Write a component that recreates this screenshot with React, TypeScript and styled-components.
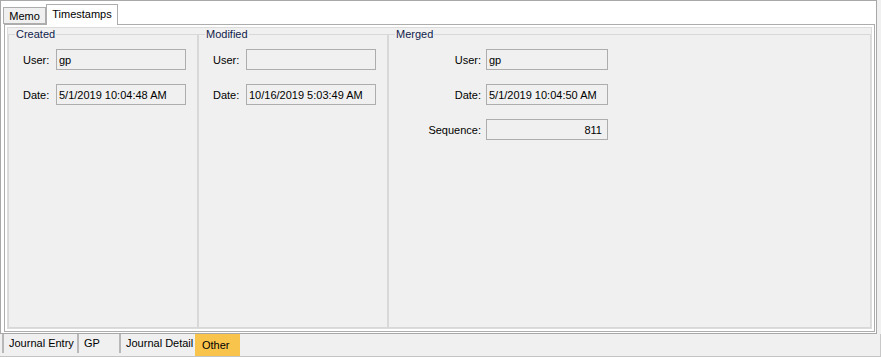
import React from 'react';
import styled, {createGlobalStyle} from "styled-components";

const GlobalStyle = createGlobalStyle`
  body {
    margin: 0;
    background: #f0f0f0;
    font-family: "Liberation Sans", Arial, sans-serif;
    font-size: 11px;
    color: #000;
  }
`

const Root = styled.div`
  width: 881px;
  height: 357px;
  display: flex;
  flex-direction: column;
  overflow: hidden;
`

const Frame = styled.div`
  width: 877px;
  height: 334px;
  box-sizing: border-box;
  border: 1px solid #a8a8a8;
  background: #fff;
  display: flex;
  flex-direction: column;
`

const TabStrip = styled.div`
  height: 23px;
  display: flex;
  align-items: flex-end;
  padding-left: 2px;
`

const TopTab = styled.div<{ $width: number; $active?: boolean }>`
  box-sizing: border-box;
  width: ${p => p.$width}px;
  height: ${p => p.$active ? 21 : 17}px;
  margin-bottom: ${p => p.$active ? -1 : 0}px;
  padding-top: ${p => p.$active ? 3 : 2}px;
  text-align: center;
  border: 1px solid #adadad;
  border-bottom: ${p => p.$active ? 'none' : '1px solid #adadad'};
  background: ${p => p.$active ? '#fff' : '#f0f0f0'};
  position: relative;
  z-index: ${p => p.$active ? 1 : 0};
  white-space: nowrap;
`

const TabPage = styled.div`
  flex: 1;
  margin: 0 1px 1px 3px;
  border: 1px solid #adadad;
  padding: 2px;
  background: #fff;
  display: flex;
`

const Panel = styled.div`
  flex: 1;
  border: 1px solid #dcdcdc;
  background: #f0f0f0;
  display: flex;
`

const Group = styled.fieldset<{ $width?: number }>`
  box-sizing: border-box;
  ${p => p.$width ? `width: ${p.$width}px;` : 'flex: 1;'}
  min-width: 0;
  margin: 0;
  padding: 0;
  border: 1px solid #d8d8d8;
`

const Legend = styled.legend`
  margin-left: 6px;
  padding: 0 1px;
  line-height: 13px;
  color: #101c4c;
`

const Fields = styled.div<{ $labelWidth: number; $boxWidth: number; $indent: number; $right?: boolean }>`
  display: grid;
  grid-template-columns: ${p => p.$labelWidth}px ${p => p.$boxWidth}px;
  column-gap: ${p => p.$right ? 5 : 6}px;
  row-gap: 14px;
  align-items: center;
  justify-items: ${p => p.$right ? 'end' : 'start'};
  margin: 8px 0 0 ${p => p.$indent}px;
`

const Label = styled.span`
  white-space: nowrap;
`

const Box = styled.div<{ $align?: string }>`
  box-sizing: border-box;
  width: 100%;
  height: 21px;
  border: 1px solid #adadad;
  background: #f0f0f0;
  padding: 0 5px 0 2px;
  display: flex;
  align-items: center;
  justify-content: ${p => p.$align === 'right' ? 'flex-end' : 'flex-start'};
  white-space: nowrap;
`

const BottomStrip = styled.div`
  height: 23px;
  box-sizing: border-box;
  display: flex;
  align-items: flex-start;
  padding-left: 2px;
  border-bottom: 1px solid #c4c4c4;
  border-right: 1px solid #c8c8c8;
`

const BottomTab = styled.div<{ $width: number; $active?: boolean }>`
  box-sizing: border-box;
  width: ${p => p.$width}px;
  height: ${p => p.$active ? 22 : 19}px;
  padding: ${p => p.$active ? '5px 0 0 7px' : '3px 0 0 5px'};
  background: ${p => p.$active ? '#f8c44c' : '#f0f0f0'};
  border-left: ${p => p.$active ? 'none' : '2px solid #b8b8b8'};
  white-space: nowrap;
`

type Field = { label: string; value: string; align?: string }

const columns: { title: string; width?: number; labelWidth: number; boxWidth: number; indent: number; right?: boolean; fields: Field[] }[] = [
    {
        title: "Created", width: 190, labelWidth: 27, boxWidth: 130, indent: 14,
        fields: [{label: "User:", value: "gp"}, {label: "Date:", value: "5/1/2019 10:04:48 AM"}]
    },
    {
        title: "Modified", width: 190, labelWidth: 27, boxWidth: 130, indent: 14,
        fields: [{label: "User:", value: ""}, {label: "Date:", value: "10/16/2019 5:03:49 AM"}]
    },
    {
        title: "Merged", labelWidth: 92, boxWidth: 122, indent: 0, right: true,
        fields: [
            {label: "User:", value: "gp"},
            {label: "Date:", value: "5/1/2019 10:04:50 AM"},
            {label: "Sequence:", value: "811", align: "right"},
        ]
    },
]

const bottomTabs = [
    {name: "Journal Entry", width: 75},
    {name: "GP", width: 42},
    {name: "Journal Detail", width: 76},
    {name: "Other", width: 45, active: true},
]

export default function App() {
    return (
        <>
            <GlobalStyle/>
            <Root>
                <Frame>
                    <TabStrip>
                        <TopTab $width={43}>Memo</TopTab>
                        <TopTab $width={72} $active>Timestamps</TopTab>
                    </TabStrip>
                    <TabPage>
                        <Panel>
                            {columns.map(col => (
                                <Group key={col.title} $width={col.width}>
                                    <Legend>{col.title}</Legend>
                                    <Fields $labelWidth={col.labelWidth} $boxWidth={col.boxWidth}
                                            $indent={col.indent} $right={col.right}>
                                        {col.fields.map(f => (
                                            <React.Fragment key={f.label}>
                                                <Label>{f.label}</Label>
                                                <Box $align={f.align}>{f.value}</Box>
                                            </React.Fragment>
                                        ))}
                                    </Fields>
                                </Group>
                            ))}
                        </Panel>
                    </TabPage>
                </Frame>
                <BottomStrip>
                    {bottomTabs.map(t => (
                        <BottomTab key={t.name} $width={t.width} $active={t.active}>{t.name}</BottomTab>
                    ))}
                </BottomStrip>
            </Root>
        </>
    )
}
